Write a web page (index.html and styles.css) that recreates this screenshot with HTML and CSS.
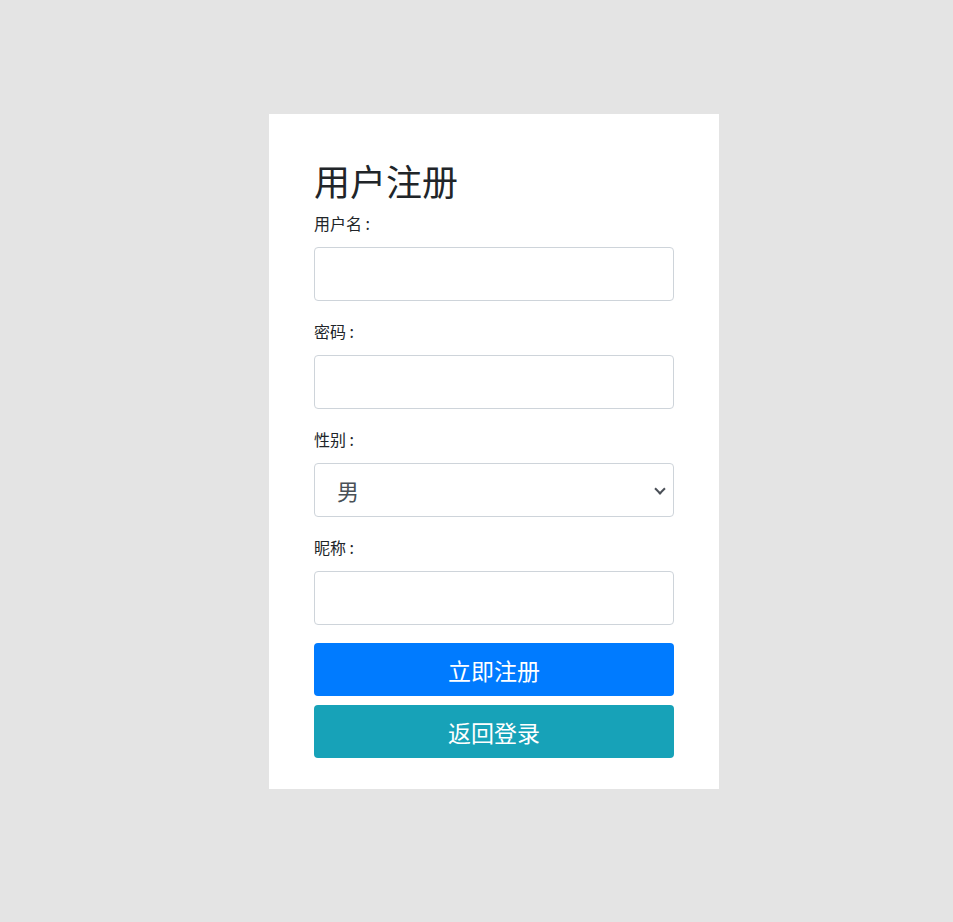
FILE: index.html
```html
<!DOCTYPE html>
<html lang="zh-CN">
<head>
    <meta charset="UTF-8">
    <meta name="viewport" content="width=device-width, initial-scale=1.0">
    <title>用户注册</title>
    <link rel="stylesheet" href="styles.css">
</head>
<body>

    <div class="page">
        <div class="card">
            <h2>用户注册</h2>
            <div class="form-group">
                <label for="username">用户名 :</label>
                <input type="text" id="username">
            </div>
            <div class="form-group">
                <label for="password">密码 :</label>
                <input type="password" id="password">
            </div>
            <div class="form-group">
                <label for="gender">性别 :</label>
                <div class="select-wrap">
                    <select id="gender">
                        <option>男</option>
                        <option>女</option>
                    </select>
                </div>
            </div>
            <div class="form-group">
                <label for="nickname">昵称 :</label>
                <input type="text" id="nickname">
            </div>
            <button class="btn btn-primary">立即注册</button>
            <button class="btn btn-info">返回登录</button>
        </div>
    </div>

</body>
</html>
```

FILE: styles.css
```css
* {
    box-sizing: border-box;
    margin: 0;
    padding: 0;
}

body {
    font-family: "Noto Sans CJK SC", "Liberation Sans", sans-serif;
    background-color: #e4e4e4;
    color: #212529;
    min-height: 100vh;
}

.page {
    padding: 114px 0 0 269px;
}

.card {
    width: 450px;
    background-color: white;
    padding: 45px 45px 31px;
}

.card h2 {
    font-size: 36px;
    font-weight: 400;
    line-height: 43px;
    margin-bottom: 9px;
}

.form-group {
    margin-bottom: 18px;
}

.form-group:last-of-type {
    margin-bottom: 18px;
}

.form-group label {
    display: block;
    font-size: 16px;
    line-height: 24px;
    margin-bottom: 12px;
}

.form-group input,
.form-group select {
    display: block;
    width: 100%;
    height: 54px;
    padding: 0 22px;
    font-family: inherit;
    font-size: 22px;
    color: #495057;
    background-color: white;
    border: 1px solid #ced4da;
    border-radius: 4px;
}

.select-wrap {
    position: relative;
}

.form-group select {
    appearance: none;
    padding-left: 22px;
}

.select-wrap::after {
    content: "";
    position: absolute;
    right: 10px;
    top: 22px;
    width: 6px;
    height: 6px;
    border-right: 2px solid #4a4f57;
    border-bottom: 2px solid #4a4f57;
    transform: rotate(45deg);
    pointer-events: none;
}

.btn {
    display: block;
    width: 100%;
    height: 53px;
    font-family: inherit;
    font-size: 23px;
    color: white;
    border: none;
    border-radius: 4px;
    cursor: pointer;
}

.btn-primary {
    background-color: #007bff;
    margin-bottom: 9px;
}

.btn-info {
    background-color: #17a2b8;
}
```
